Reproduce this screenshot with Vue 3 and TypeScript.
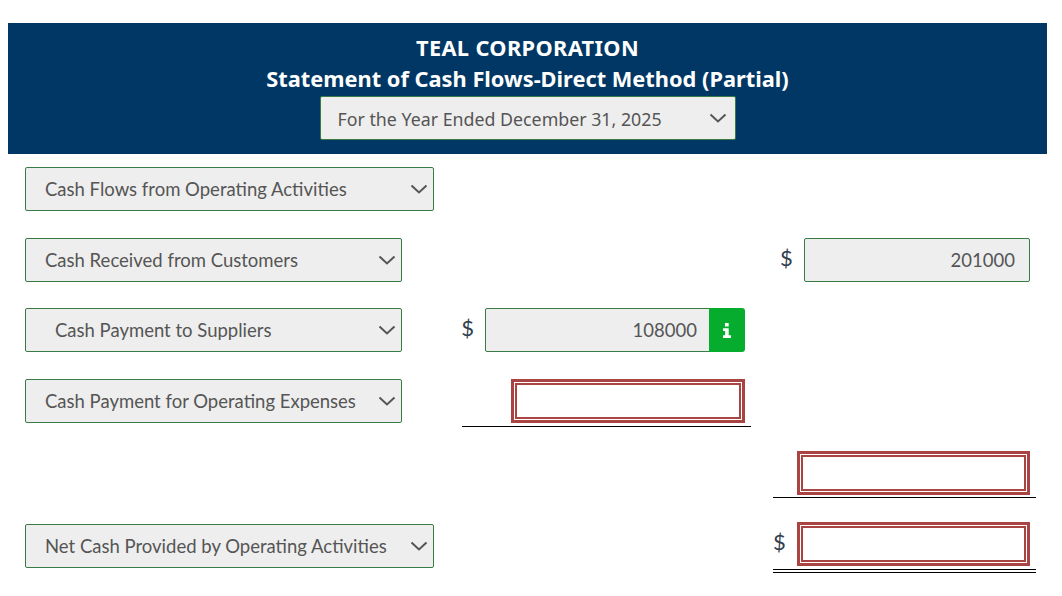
<template>
  <div class="page">
    <header class="head">
      <div class="title">TEAL CORPORATION</div>
      <div class="title">Statement of Cash Flows-Direct Method (Partial)</div>
      <div class="pick pick-head">
        <select>
          <option>For the Year Ended December 31, 2025</option>
        </select>
        <svg class="chev" viewBox="0 0 18 10"><path d="M1.5 1.5 9 8.5l7.5-7" /></svg>
      </div>
    </header>

    <div class="sheet">
      <template v-for="row in rows" :key="row.label">
        <div class="label-cell">
          <div v-if="row.label" class="pick" :class="[row.pick, { 'pick-low': row.low }]">
            <select :class="{ indent: row.indent }">
              <option>{{ row.label }}</option>
            </select>
            <svg class="chev" viewBox="0 0 18 10"><path d="M1.5 1.5 9 8.5l7.5-7" /></svg>
          </div>
        </div>
        <div class="amount-cell" :class="row.col === 1 ? row.line : ''">
          <template v-if="row.col === 1">
            <span v-if="row.dollar" class="dollar">$</span>
            <div class="field" :class="row.width">
              <input :class="{ bad: !row.value, joined: row.info }" :value="row.value" type="text" />
              <button v-if="row.info" class="info" type="button">
                <svg viewBox="0 0 10 16"><path d="M2.8 0h4v3.6h-4zM.8 5.600h6v7.500H9.200V16H.8v-2.900H3V8.500H.8z" /></svg>
              </button>
            </div>
          </template>
        </div>
        <div class="amount-cell last" :class="row.col === 2 ? row.line : ''">
          <template v-if="row.col === 2">
            <span v-if="row.dollar" class="dollar">$</span>
            <div class="field" :class="row.width">
              <input :class="{ bad: !row.value }" :value="row.value" type="text" />
            </div>
          </template>
        </div>
      </template>
    </div>
  </div>
</template>

<script setup lang="ts">
interface Row {
  label: string
  pick: string
  col: number
  width?: string
  value?: string
  dollar?: boolean
  info?: boolean
  indent?: boolean
  low?: boolean
  line?: string
}

const rows: Row[] = [
  { label: 'Cash Flows from Operating Activities', pick: 'wide', col: 0 },
  { label: 'Cash Received from Customers', pick: 'narrow', col: 2, width: 'w226', value: '201000', dollar: true },
  { label: 'Cash Payment to Suppliers', pick: 'narrow', col: 1, width: 'w260', value: '108000', dollar: true, info: true, indent: true },
  { label: 'Cash Payment for Operating Expenses', pick: 'narrow', col: 1, width: 'w234', line: 'single' },
  { label: '', pick: '', col: 2, width: 'w233', line: 'single' },
  { label: 'Net Cash Provided by Operating Activities', pick: 'wide', col: 2, width: 'w233', dollar: true, low: true, line: 'double' }
]
</script>

<style scoped>
.page {
  width: 1039px;
  min-height: 596px;
  padding: 23px 0 0 8px;
  box-sizing: content-box;
  font-family: Lato, sans-serif;
  color: #555;
}

.head {
  display: flex;
  flex-direction: column;
  align-items: center;
  height: 131px;
  padding-top: 9px;
  box-sizing: border-box;
  background-color: #003764;
}

.title {
  height: 31px;
  line-height: 31px;
  font-family: "Noto Sans", sans-serif;
  font-size: 21.8px;
  font-weight: 700;
  color: #fff;
}

.title:first-child {
  letter-spacing: 0.35px;
}

.pick {
  position: relative;
  height: 44px;
}

.pick-head {
  width: 416px;
  margin-top: 2px;
}

.pick-head select {
  padding: 2px 36px 0 17px;
  font-family: "Noto Sans", sans-serif;
  font-size: 17.8px;
}

.pick-head .chev {
  right: 9px;
}

.wide {
  width: 409px;
}

.narrow {
  width: 377px;
}

.pick-low {
  margin-top: 2px;
}

select {
  appearance: none;
  display: block;
  width: 100%;
  height: 100%;
  padding: 0 36px 0 19px;
  border: 1px solid #3a7a45;
  border-radius: 2px;
  background-color: #eee;
  font-family: Lato, sans-serif;
  font-size: 18.5px;
  color: #555;
  box-sizing: border-box;
}

select.indent {
  padding-left: 29px;
}

.chev {
  position: absolute;
  top: 17px;
  right: 6px;
  width: 18px;
  height: 10px;
  fill: none;
  stroke: #555;
  stroke-width: 2;
  pointer-events: none;
}

.sheet {
  display: grid;
  grid-template-columns: 437px 289px 285px;
  grid-template-rows: 71px 70px 71px 72px 71px 60px;
  margin-top: 13px;
  padding-left: 17px;
}

.amount-cell {
  display: flex;
  justify-content: flex-end;
  align-self: start;
  gap: 11px;
  height: 44px;
  padding-right: 6px;
}

.last {
  margin-left: 22px;
}

.single {
  height: 47px;
  border-bottom: 1px solid #000;
}

.last.single {
  height: 46px;
}

.double {
  height: 47px;
  border-bottom: 4px double #000;
}

.dollar {
  width: 13px;
  line-height: 40px;
  font-size: 22px;
  color: #2f3e4e;
}

.field {
  display: flex;
  height: 44px;
}

.w226 {
  width: 226px;
}

.w233 {
  width: 233px;
}

.w234 {
  width: 234px;
}

.w260 {
  width: 260px;
}

input {
  flex: 1;
  min-width: 0;
  height: 100%;
  padding: 0 14px;
  border: 1px solid #3a7a45;
  border-radius: 2px;
  background-color: #eee;
  font-family: Lato, sans-serif;
  font-size: 18.5px;
  color: #555;
  text-align: right;
  box-sizing: border-box;
}

input.joined {
  padding-right: 12px;
  border-radius: 2px 0 0 2px;
}

input.bad {
  border: 3px solid #a94442;
  border-radius: 0;
  background-color: #fff;
  box-shadow: inset 0 0 0 1px #fff, inset 0 0 0 3px #a94442;
}

.info {
  display: flex;
  align-items: center;
  justify-content: center;
  width: 36px;
  padding: 0;
  margin-left: -1px;
  border: none;
  border-radius: 0 3px 3px 0;
  background-color: #05ac2e;
}

.info svg {
  width: 10px;
  height: 15px;
  fill: #fff;
}
</style>
